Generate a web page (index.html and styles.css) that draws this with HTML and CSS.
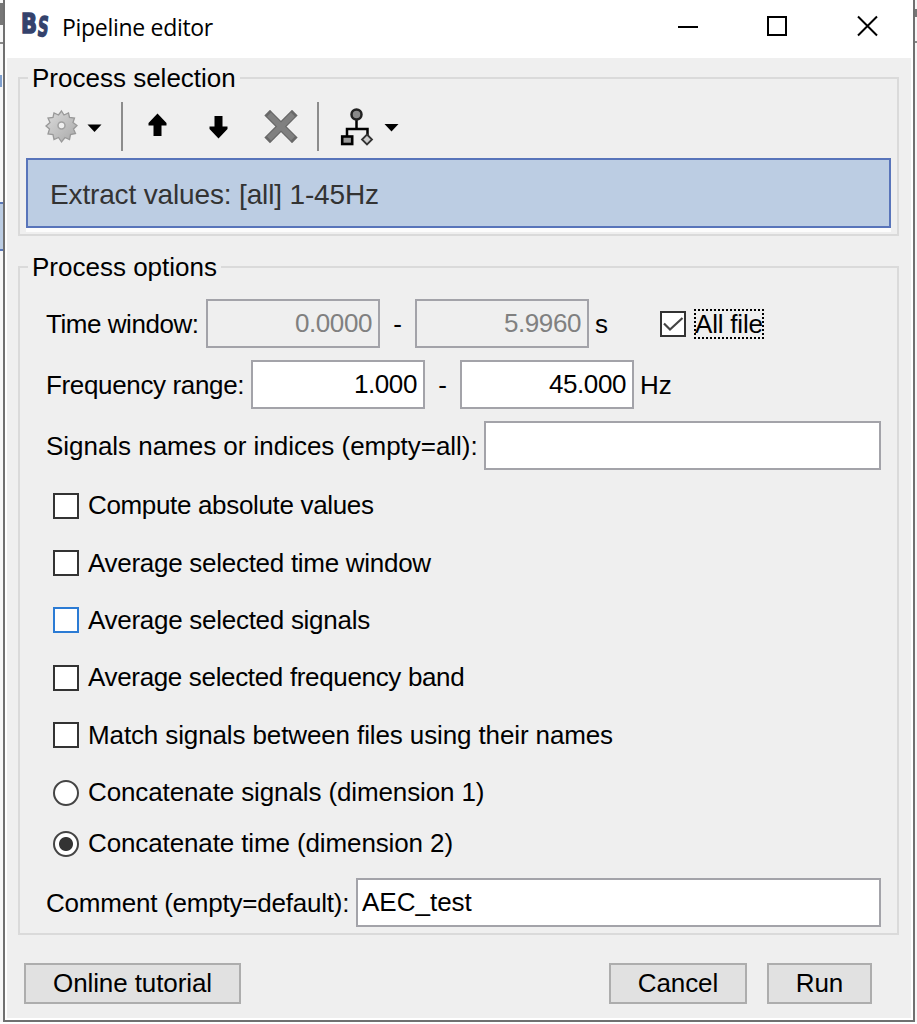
FILE: index.html
```html
<!DOCTYPE html>
<html lang="en">
<head>
  <meta charset="UTF-8" />
  <title>Pipeline editor</title>
  <link rel="stylesheet" href="styles.css">
</head>
<body>

  <!-- edges of the window behind -->
  <div class="behind behind-left">
    <span class="dark-bit"></span>
    <span class="dark-line"></span>
    <span class="blue-bit"></span>
    <span class="selected-row"></span>
  </div>

  <div class="window">
    <div class="titlebar">
      <div class="logo"><span class="logo-b">B</span><span class="logo-s">S</span></div>
      <div class="title">Pipeline editor</div>
      <svg class="controls" width="202" height="24" viewBox="0 0 202 24" fill="none" stroke="#000" stroke-width="2">
        <path d="M1 13H21" />
        <rect x="91" y="3" width="18" height="18" />
        <path d="M181 2.500L200 21.500M200 2.500L181 21.500" />
      </svg>
    </div>

    <div class="content">
      <fieldset class="group selection">
        <legend>Process selection</legend>
        <div class="toolbar">
          <svg class="icon-gear" width="50" height="32" viewBox="0 0 50 32">
            <defs>
              <linearGradient id="gear" x1="0" y1="0" x2="1" y2="1">
                <stop offset="0" stop-color="#dcdcdc" />
                <stop offset="1" stop-color="#a8a8a8" />
              </linearGradient>
            </defs>
            <path d="M15.500 1L18 5L22.500 3L23.500 7.500L28.500 8L27 12.500L31 15.500L27.500 19L29.500 23.500L24.500 24.500L23.500 29.500L19 27.500L15.500 32L12.500 27.500L8 29.500L7 24.500L2 24L3.500 19L0 16L4 12.500L2 8L7 7.500L8 3L12.500 5Z" fill="url(#gear)" stroke="#999" stroke-width="1.300" />
            <circle cx="15.500" cy="15.500" r="3.500" fill="#efefef" stroke="#a0a0a0" stroke-width="1.500" />
            <path d="M41.500 14.500H55.500L48.500 22Z" fill="#000" />
          </svg>
          <span class="separator"></span>
          <svg class="icon-up" width="20" height="24" viewBox="0 0 20 24"><path d="M9.500 0.500L18.500 10V12.500H13.500V23H5.500V12.500H0.500V10Z" /></svg>
          <svg class="icon-down" width="20" height="24" viewBox="0 0 20 24"><path d="M9.500 23.500L18.500 14V11.500H13.500V1H5.500V11.500H0.500V14Z" /></svg>
          <svg class="icon-delete" width="32" height="32" viewBox="0 0 32 32">
            <path d="M5 5.500L27 27.500M27 5.500L5 27.500" stroke="#686868" stroke-width="8" stroke-linecap="square" />
            <path d="M6 6.500L26 26.500M26 6.500L6 26.500" stroke="#808080" stroke-width="5.500" stroke-linecap="square" />
          </svg>
          <span class="separator"></span>
          <svg class="icon-tree" width="58" height="38" viewBox="0 0 58 38">
            <path d="M15.500 12V21.500M6 30V22H26.500V28" fill="none" stroke="#000" stroke-width="2.500" />
            <circle cx="15.500" cy="7.500" r="5" fill="#8a8a8a" stroke="#222" stroke-width="2.500" />
            <rect x="1.200" y="29.500" width="10" height="7.500" fill="#999" stroke="#000" stroke-width="2.600" />
            <path d="M26 27.500L31 32.500L26 37.500L21 32.500Z" fill="#ccc" stroke="#333" stroke-width="1.800" />
            <path d="M43.500 17H57.500L50.500 24.500Z" fill="#000" />
          </svg>
        </div>
        <div class="process-list">
          <div class="process">Extract values: [all] 1-45Hz</div>
        </div>
      </fieldset>

      <fieldset class="group options">
        <legend>Process options</legend>
        <div class="row">
          <label class="w-time">Time window:</label>
          <input class="num" type="text" value="0.0000" disabled />
          <span class="dash">-</span>
          <input class="num" type="text" value="5.9960" disabled />
          <span class="unit">s</span>
          <div class="all-file">
            <span class="box">
              <svg width="26" height="26" viewBox="0 0 26 26"><path d="M4 12.500L10 18.500L22.500 7" fill="none" stroke="#444" stroke-width="2.200" /></svg>
            </span>
            <span class="focused">All file</span>
          </div>
        </div>
        <div class="row">
          <label class="w-freq">Frequency range:</label>
          <input class="num" type="text" value="1.000" />
          <span class="dash">-</span>
          <input class="num" type="text" value="45.000" />
          <span class="unit">Hz</span>
        </div>
        <div class="row">
          <label class="w-signals">Signals names or indices (empty=all):</label>
          <input class="wide" type="text" value="" />
        </div>

        <div class="checks">
          <div class="check tighter"><span class="box"></span>Compute absolute values</div>
          <div class="check tight"><span class="box"></span>Average selected time window</div>
          <div class="check tight"><span class="box hover"></span>Average selected signals</div>
          <div class="check tighter"><span class="box"></span>Average selected frequency band</div>
          <div class="check"><span class="box"></span>Match signals between files using their names</div>
          <div class="check"><span class="radio"></span>Concatenate signals (dimension 1)</div>
          <div class="check last"><span class="radio on"></span>Concatenate time (dimension 2)</div>
        </div>

        <div class="row">
          <label class="w-comment">Comment (empty=default):</label>
          <input class="wide" type="text" value="AEC_test" />
        </div>
      </fieldset>

      <div class="footer">
        <button class="btn-tutorial">Online tutorial</button>
        <button class="btn-cancel">Cancel</button>
        <button class="btn-run">Run</button>
      </div>
    </div>
  </div>

  <div class="behind behind-right">
    <span class="dark-bit"></span>
    <span class="dark-line"></span>
  </div>

</body>
</html>
```
FILE: styles.css
```css
* {
  box-sizing: border-box;
}
body {
  margin: 0;
  width: 917px;
  height: 1024px;
  overflow: hidden;
  display: flex;
  background: #fff;
  font-family: "Liberation Sans", Arial, sans-serif;
  font-size: 26px;
  color: #000;
}
svg {
  display: block;
  flex: none;
  overflow: visible;
}

/* strips left and right of the window */
.behind {
  flex: none;
  width: 3px;
  height: 1022px;
  display: flex;
  flex-direction: column;
  background: #f7f7f7;
}
.behind-right {
  width: 2px;
}
.dark-bit {
  height: 22px;
  margin-top: 3px;
  background: #777;
}
.behind-right .dark-bit {
  height: 8px;
  margin-top: 9px;
}
.dark-line {
  height: 2px;
  margin-top: 17px;
  background: #888;
}
.behind-right .dark-line {
  margin-top: 24px;
}
.blue-bit {
  width: 2px;
  height: 12px;
  margin-top: 31px;
  background: #7f9fce;
}
.selected-row {
  height: 49px;
  margin-top: 115px;
  background: #bccde3;
  border-top: 2px solid #5b78b8;
  border-bottom: 2px solid #5b78b8;
}

.window {
  flex: none;
  width: 912px;
  height: 1022px;
  background: #fff;
  border: 2px solid #707070;
  border-top: none;
  display: flex;
  flex-direction: column;
}
.titlebar {
  height: 58px;
  flex: none;
  display: flex;
  align-items: flex-start;
  padding-left: 16px;
}
.logo {
  width: 41px;
  height: 40px;
  padding-top: 9px;
  display: flex;
  color: #34426c;
  font-family: "DejaVu Sans", sans-serif;
  font-weight: bold;
  line-height: 30px;
}
.logo-b {
  width: 17px;
  font-size: 27px;
  -webkit-text-stroke: 1.5px #34426c;
  transform: scaleX(.78);
  transform-origin: left;
}
.logo-s {
  font-size: 27px;
  padding-top: 3px;
  -webkit-text-stroke: 1.5px #34426c;
  transform: scaleX(.55) skewX(-12deg);
  transform-origin: left;
}
.title {
  font-family: "Open Sans", "Noto Sans", sans-serif;
  font-size: 23px;
  letter-spacing: -.3px;
  line-height: 32px;
  padding-top: 11px;
  width: 615px;
}
.controls {
  margin-top: 14px;
}

.content {
  flex: 1;
  margin: 0 2px 2px;
  padding: 6px 11px 0;
  background: #efefef;
}

/* group boxes */
.group {
  margin: 0;
  min-width: 0;
  width: 881px;
  border: 2px solid #dadada;
}
.group legend {
  padding: 0 4px;
  height: 28px;
  line-height: 29px;
}
.selection {
  height: 172px;
  padding: 0 6px;
}
.selection legend {
  margin-left: 2px;
}
.options {
  height: 682px;
  margin-top: 17px;
  padding: 18px 16px 0 26px;
}
.options legend {
  margin-left: -18px;
}

.toolbar {
  display: flex;
  align-items: center;
  height: 66px;
  padding: 4px 0 2px 20px;
}
.separator {
  width: 2px;
  height: 49px;
  background: #8c8c8c;
}
.icon-gear {
  margin-right: 25px;
}
.icon-up {
  margin: -3px 0 0 25px;
}
.icon-down {
  margin: 2px 0 0 41px;
}
.icon-delete {
  margin: 0 20px 0 36px;
}
.icon-tree {
  margin-left: 22px;
}
.process-list {
  background: #fcfcfc;
  height: 74px;
  padding-bottom: 4px;
}
.process {
  height: 70px;
  line-height: 69px;
  padding-left: 22px;
  border: 2px solid #5874ba;
  background: #bccde3;
  color: #333;
  font-size: 28px;
  letter-spacing: -.15px;
}

/* option rows */
.row {
  display: flex;
  height: 49px;
  margin-bottom: 12px;
  line-height: 50px;
}
.row label {
  flex: none;
  white-space: nowrap;
}
.w-time {
  width: 160px;
  letter-spacing: -.45px;
}
.w-freq {
  width: 205px;
  letter-spacing: -.35px;
}
.w-signals {
  width: 438px;
  letter-spacing: -.03px;
}
.w-comment {
  width: 310px;
  letter-spacing: -.22px;
}
input {
  height: 49px;
  margin: 0;
  border: 2px solid #a3a3a9;
  border-radius: 0;
  background: #fff;
  color: #000;
  font: inherit;
  outline: none;
}
input.num {
  width: 174px;
  padding: 0 6px 1px;
  text-align: right;
  letter-spacing: -.4px;
}
input:disabled {
  background: #efefef;
  color: #808080;
}
input.wide {
  flex: 1;
  min-width: 0;
  padding: 0 4px 1px;
}
.dash {
  width: 35px;
  text-align: center;
}
.unit {
  padding-left: 6px;
}
.all-file {
  display: flex;
  align-items: center;
  margin-left: 52px;
}
.focused {
  margin-left: 8px;
  height: 30px;
  width: 70px;
  line-height: 26px;
  border: 2px dotted #000;
  white-space: nowrap;
  text-indent: -1px;
  letter-spacing: -.2px;
}

.checks {
  margin-top: -5px;
  padding-left: 7px;
  height: 401px;
}
.check {
  display: flex;
  align-items: center;
  height: 57.4px;
  letter-spacing: -.12px;
}
.check.last {
  height: 45px;
}
.check.tight {
  letter-spacing: -.28px;
}
.check.tighter {
  letter-spacing: -.34px;
}
.box {
  flex: none;
  width: 26px;
  height: 26px;
  margin-right: 9px;
  border: 2px solid #333;
  background: #fff;
}
.box svg {
  margin: -2px;
}
.all-file .box {
  margin-right: 0;
}
.box.hover {
  border-color: #2b7bd4;
}
.radio {
  flex: none;
  width: 26px;
  height: 26px;
  margin-right: 9px;
  border: 2px solid #444;
  border-radius: 50%;
  background: #fff;
}
.radio.on {
  background: radial-gradient(circle, #333 6.5px, #fff 7.5px);
}

.footer {
  display: flex;
  margin-top: 28px;
  padding-left: 6px;
}
button {
  height: 41px;
  padding: 0;
  border: 2px solid #adadad;
  border-radius: 0;
  background: #e1e1e1;
  color: #000;
  font: inherit;
  letter-spacing: -.1px;
}
.btn-tutorial {
  width: 217px;
}
.btn-cancel {
  width: 138px;
  margin-left: 368px;
}
.btn-run {
  width: 105px;
  margin-left: 20px;
}
```
